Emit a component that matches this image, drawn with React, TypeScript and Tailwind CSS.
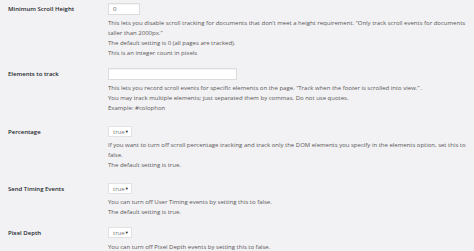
const FONT = "font-['Segoe_UI','Open_Sans','Noto_Sans',sans-serif]";

type Row = {
  label: string;
  field: "text" | "wide" | "select";
  value?: string;
  lines: string[];
  gap: string;
};

const ROWS: Row[] = [
  {
    label: "Minimum Scroll Height",
    field: "text",
    value: "0",
    gap: "pt-[3px]",
    lines: [
      "This lets you disable scroll tracking for documents that don\u2019t meet a height requirement. \u201cOnly track scroll events for documents",
      "taller than 2000px.\u201d",
      "The default setting is 0 (all pages are tracked).",
      "This is an integer count in pixels",
    ],
  },
  {
    label: "Elements to track",
    field: "wide",
    gap: "pt-[10px]",
    lines: [
      "This lets you record scroll events for specific elements on the page. \u201cTrack when the footer is scrolled into view.\u201d .",
      "You may track multiple elements; just separated them by commas. Do not use quotes.",
      "Example: #colophon",
    ],
  },
  {
    label: "Percentage",
    field: "select",
    gap: "pt-[13px]",
    lines: [
      "If you want to turn off scroll percentage tracking and track only the DOM elements you specify in the elements option, set this to",
      "false.",
      "The default setting is true.",
    ],
  },
  {
    label: "Send Timing Events",
    field: "select",
    gap: "pt-[13px]",
    lines: ["You can turn off User Timing events by setting this to false.", "The default setting is true."],
  },
  {
    label: "Pixel Depth",
    field: "select",
    gap: "pt-[10px]",
    lines: ["You can turn off Pixel Depth events by setting this to false."],
  },
];

function Field({ row }: { row: Row }) {
  if (row.field === "select") {
    return (
      <div className="flex h-[11px] w-[24px] items-center justify-between border border-[#e2e2e2] bg-white pl-[4px] pr-[3px]">
        <span className="text-[6px] leading-none text-[#777]">true</span>
        <span className="text-[4px] leading-none text-[#222]">▼</span>
      </div>
    );
  }
  return (
    <div
      className={`flex h-[12px] items-center border border-[#dcdcdc] bg-white px-[4px] shadow-[inset_0_1px_1px_rgba(0,0,0,0.05)] ${
        row.field === "wide" ? "w-[129px]" : "w-[32px]"
      }`}
    >
      <span className="text-[6px] leading-none text-[#555]">{row.value}</span>
    </div>
  );
}

export default function App() {
  return (
    <div className={`h-[251px] w-[474px] overflow-hidden bg-[#f2f1f3] ${FONT}`}>
      {ROWS.map((row, idx) => (
        <div key={row.label} className={`grid grid-cols-[100px_1fr] pl-[8px] ${row.gap}`}>
          <div className="flex h-[12px] items-center text-[6px] font-semibold text-[#23282d]">{row.label}</div>
          <div>
            <Field row={row} />
            <p
              className={`whitespace-nowrap text-[6px] leading-[10px] text-[#585858] ${
                idx === ROWS.length - 1 ? "mt-[4px]" : "mt-[3px]"
              }`}
            >
              {row.lines.map((l, i) => (
                <span key={i} className="block">
                  {l}
                </span>
              ))}
            </p>
          </div>
        </div>
      ))}
    </div>
  );
}
